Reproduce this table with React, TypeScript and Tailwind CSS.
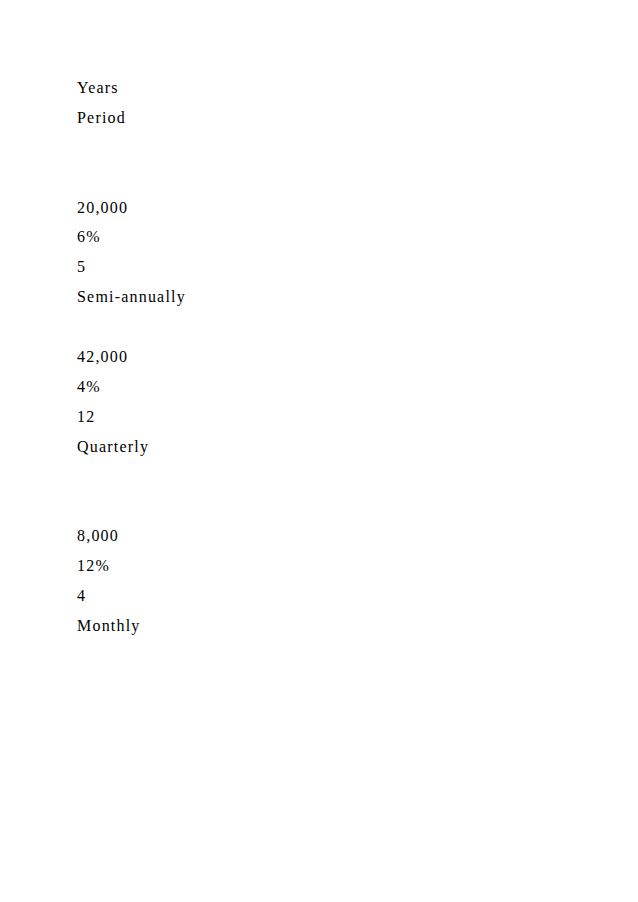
const lines = [
  "Years",
  "Period",
  "",
  "",
  "20,000",
  "6%",
  "5",
  "Semi-annually",
  "",
  "42,000",
  "4%",
  "12",
  "Quarterly",
  "",
  "",
  "8,000",
  "12%",
  "4",
  "Monthly",
];

export default function App() {
  return (
    <div className="min-h-[902px] w-[638px] bg-white pl-[77px] pt-[73px] font-['Liberation_Serif',serif] text-[16px] leading-[29.9px] tracking-[1.2px] text-black">
      {lines.map((line, i) => (
        <div key={i} className="h-[29.9px]">
          {line}
        </div>
      ))}
    </div>
  );
}
